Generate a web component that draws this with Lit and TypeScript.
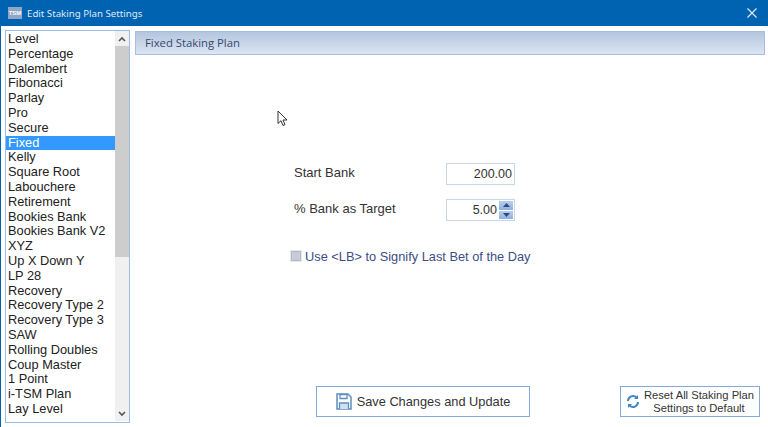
import { LitElement, html, css } from "lit";
import { customElement } from "lit/decorators.js";

const PLANS = ["Level","Percentage","Dalembert","Fibonacci","Parlay","Pro","Secure","Fixed","Kelly","Square Root","Labouchere","Retirement","Bookies Bank","Bookies Bank V2","XYZ","Up X Down Y","LP 28","Recovery","Recovery Type 2","Recovery Type 3","SAW","Rolling Doubles","Coup Master","1 Point","i-TSM Plan","Lay Level"];

@customElement("app-root")
export class AppRoot extends LitElement {
  static styles = css`
    :host { display: block; width: 768px; height: 427px; overflow: hidden; background: #fff; font-family: "Liberation Sans", Arial, sans-serif; position: relative; }
    .window { width: 768px; height: 427px; display: flex; flex-direction: column; box-sizing: border-box; border-left: 1px solid #0063b1; }
    .title { height: 26px; background: #0063b1; display: flex; align-items: center; color: #dfe9f4; font-size: 9.7px; padding: 0 11px 0 7px; flex: none; font-family: "Noto Sans", sans-serif; }
    .logo { width: 14px; height: 12px; background: #8fa6c4; color: #fff; font: bold 6px "Liberation Sans", sans-serif; display: flex; align-items: center; justify-content: center; margin-right: 5px; }
    .close { margin-left: auto; width: 10px; height: 10px; }
    .body { flex: 1; display: flex; min-height: 0; padding: 4px 3px 4px 4px; gap: 5px; }
    .list { width: 125px; flex: none; box-sizing: border-box; border: 1px solid #9dbce3; display: flex; background: #fff; }
    .items { flex: 1; min-width: 0; padding-top: 1px; }
    .item { height: 14.8px; line-height: 14.8px; font-size: 12.8px; color: #222; padding-left: 2px; white-space: nowrap; }
    .item.sel { background: #3399ff; color: #fff; }
    .scroll { width: 14px; flex: none; background: #f0f0f0; display: flex; flex-direction: column; margin-bottom: 1px; }
    .arrow { height: 15px; display: flex; align-items: center; justify-content: center; flex: none; }
    .arrow svg { width: 8px; height: 6px; }
    .thumb { height: 211px; background: #cdcdcd; flex: none; }
    .track { flex: 1; }
    .main { flex: 1; min-width: 0; display: flex; flex-direction: column; padding-top: 1px; }
    .header { height: 24px; box-sizing: border-box; border: 1px solid #a3bfe3; background: linear-gradient(#b4c5de, #dce5f2); color: #36486f; font-size: 11.3px; line-height: 22px; padding-left: 9px; font-family: "Open Sans", sans-serif; flex: none; }
    .form { padding: 108px 0 0 159px; display: flex; flex-direction: column; flex: 1; }
    .row { display: flex; align-items: center; height: 22px; margin-bottom: 14px; color: #333; font-size: 13px; }
    .row label { width: 152px; flex: none; padding-bottom: 3px; }
    .input { width: 69px; height: 22px; box-sizing: border-box; border: 1px solid #c6d6ec; display: flex; align-items: center; justify-content: flex-end; font-size: 12.5px; color: #333; padding-right: 2px; background: #fff; }
    .spin { width: 14px; height: 18px; margin-left: 2px; display: flex; flex-direction: column; gap: 1px; margin-right: -1px; }
    .spin span { flex: 1; background: linear-gradient(#b9cfec, #8fb0dc); display: flex; align-items: center; justify-content: center; }
    .spin svg { width: 7px; height: 4px; }
    .check { display: flex; align-items: center; margin: 13px 0 0 -3px; color: #3d4d86; font-size: 12.8px; height: 16px; }
    .box { width: 8px; height: 8px; border: 1px solid #b4bcc8; background: #c8ccd4; outline: 1px solid #e3e6ea; margin-right: 4px; flex: none; }
    .actions { display: flex; margin-top: auto; margin-left: 22px; padding-bottom: 6px; }
    button { background: #fff; border: 1px solid #86a9da; height: 31px; box-sizing: border-box; font-family: "Liberation Sans", sans-serif; color: #333; display: flex; align-items: center; justify-content: center; padding: 0; }
    .save { width: 214px; font-size: 12.8px; gap: 5px; }
    .save svg { width: 16px; height: 17px; }
    .reset { width: 140px; font-size: 11.2px; line-height: 13px; margin-left: 90px; gap: 4px; }
    .reset svg { width: 14px; height: 15px; }
    .reset span { text-align: center; }
    .cursor { position: absolute; left: 277px; top: 110px; width: 12px; height: 17px; }
  `;

  render() {
    return html`<div class="window">
      <div class="title">
        <span class="logo">TSM</span><span>Edit Staking Plan Settings</span>
        <svg class="close" viewBox="0 0 10 10"><path d="M.5.5l9 9M9.5.5l-9 9" stroke="#e4edf6" stroke-width="1.1" fill="none"/></svg>
      </div>
      <div class="body">
        <div class="list">
          <div class="items">
            ${PLANS.map(p => html`<div class="item ${p === "Fixed" ? "sel" : ""}">${p}</div>`)}
          </div>
          <div class="scroll">
            <div class="arrow"><svg viewBox="0 0 8 6"><path d="M1 5l3-3 3 3" stroke="#555" stroke-width="1.6" fill="none"/></svg></div>
            <div class="thumb"></div>
            <div class="track"></div>
            <div class="arrow"><svg viewBox="0 0 8 6"><path d="M1 1l3 3 3-3" stroke="#555" stroke-width="1.6" fill="none"/></svg></div>
          </div>
        </div>
        <div class="main">
          <div class="header">Fixed Staking Plan</div>
          <div class="form">
            <div class="row"><label>Start Bank</label><div class="input">200.00</div></div>
            <div class="row"><label>% Bank as Target</label><div class="input">5.00<div class="spin">
              <span><svg viewBox="0 0 7 4"><path d="M3.5 0L7 4H0z" fill="#2c4c80"/></svg></span>
              <span><svg viewBox="0 0 7 4"><path d="M0 0h7L3.5 4z" fill="#2c4c80"/></svg></span>
            </div></div></div>
            <div class="check"><span class="box"></span>Use &lt;LB&gt; to Signify Last Bet of the Day</div>
            <div class="actions">
              <button class="save">
                <svg viewBox="0 0 16 17"><path d="M1 1h11l3 3v12H1z" fill="none" stroke="#5f8fbd" stroke-width="1.5"/><path d="M4 1.5h7v4H4z" fill="none" stroke="#5f8fbd" stroke-width="1.3"/><path d="M3.5 16v-6h9v6" fill="#cfe0ef" stroke="#5f8fbd" stroke-width="1.3"/></svg>
                Save Changes and Update
              </button>
              <button class="reset">
                <svg viewBox="0 0 14 15"><path d="M2 7a5 5 0 0 1 8.5-3.500" fill="none" stroke="#3f86c4" stroke-width="2"/><path d="M12 1v4H8z" fill="#3f86c4"/><path d="M12 8a5 5 0 0 1-8.5 3.500" fill="none" stroke="#3f86c4" stroke-width="2"/><path d="M2 14v-4h4z" fill="#3f86c4"/></svg>
                <span>Reset All Staking Plan<br/>Settings to Default</span>
              </button>
            </div>
          </div>
        </div>
      </div>
    </div>
    <svg class="cursor" viewBox="0 0 12 17"><path d="M1 1v12.5l3-2.8 2 4.8 2-.9-2-4.6h4z" fill="#fff" stroke="#333" stroke-width="1"/></svg>`;
  }
}
